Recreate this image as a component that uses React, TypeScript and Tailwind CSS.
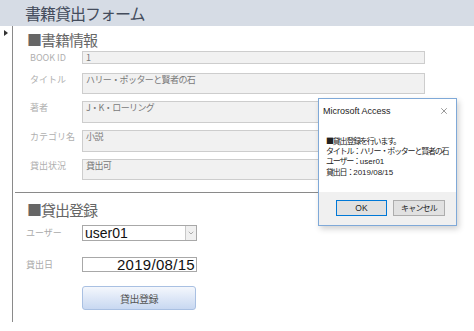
import { X, ChevronDown } from 'lucide-react';

const JP = { fontFamily: '"Noto Sans CJK JP", "Noto Sans", sans-serif' };
const LAT = { fontFamily: '"Liberation Sans", Arial, sans-serif' };

const bookFields = [
  { label: 'BOOK ID', value: '1', h: 'h-[13px]', mt: 'mt-[3px]' },
  { label: 'タイトル', value: 'ハリー・ポッターと賢者の石', h: 'h-[21px]', mt: 'mt-[9px]' },
  { label: '著者', value: 'J・K・ローリング', h: 'h-[22px]', mt: 'mt-[7px]' },
  { label: 'カテゴリ名', value: '小説', h: 'h-[22px]', mt: 'mt-[7px]' },
  { label: '貸出状況', value: '貸出可', h: 'h-[21px]', mt: 'mt-[7px]' },
];

function Jp({ children }: { children: React.ReactNode }) {
  return <span className="tracking-[-1.2px]">{children}</span>;
}

function Dialog() {
  return (
    <div className="absolute left-[318px] top-[98px] w-[139px] h-[128px] bg-white border border-[#7fa9d8] shadow-[2px_3px_6px_rgba(0,0,0,0.18)] flex flex-col">
      <div className="h-[24px] flex items-center justify-between pl-[4px] pr-[7px]">
        <span className="text-[9px] leading-none text-[#222]" style={LAT}>Microsoft Access</span>
        <X className="w-[10px] h-[10px] text-[#333]" strokeWidth={1.2} />
      </div>
      <div className="flex-1 pl-[7px] pt-[13px] text-[8px] leading-[10px] text-[#222] whitespace-nowrap">
        <div><Jp>■貸出登録を行います。</Jp></div>
        <div><Jp>タイトル：ハリー・ポッターと賢者の石</Jp></div>
        <div><Jp>ユーザー：</Jp><span style={LAT}>user01</span></div>
        <div><Jp>貸出日：</Jp><span style={LAT}>2019/08/15</span></div>
      </div>
      <div className="h-[33px] bg-[#f0f0f0] flex items-start gap-[6px] pl-[17px] pt-[8px]">
        <div className="w-[51px] h-[16px] border border-[#0078d7] bg-[#e1e1e1] flex items-center justify-center text-[8.5px] text-[#222]" style={LAT}>
          OK
        </div>
        <div className="w-[52px] h-[16px] border border-[#adadad] bg-[#e1e1e1] flex items-center justify-center text-[8px] tracking-[-0.8px] text-[#222]">
          キャンセル
        </div>
      </div>
    </div>
  );
}

export default function App() {
  return (
    <div className="relative w-[474px] h-[331px] overflow-hidden bg-white" style={JP}>
      <div className="h-[26px] bg-[#d6dce5] pl-[25px] flex items-center">
        <span className="text-[16px] leading-none tracking-[-1px] text-[#444c5c]">書籍貸出フォーム</span>
      </div>

      <div className="flex h-[296px]">
        <div className="w-[13px] border-r border-[#8a8a8a] relative">
          <div className="absolute left-[4px] top-[4px] w-0 h-0 border-y-[3px] border-y-transparent border-l-[4px] border-l-[#333]" />
        </div>

        <div className="flex-1 flex flex-col">
          <div className="pl-[14px] mt-[6px] text-[15px] leading-[16px] tracking-[-1px] text-[#666]">■書籍情報</div>

          {bookFields.map((f) => (
            <div key={f.label} className={`flex ${f.mt}`}>
              <div className="w-[52px] ml-[17px] pt-[1px] text-[9px] leading-[11px] text-[#b0b0b0] whitespace-nowrap">{f.label}</div>
              <div className={`w-[343px] ${f.h} bg-[#f1f1f1] border border-[#cdcdcd] px-[3px] pt-[1px] text-[9px] leading-[10px] tracking-[-0.6px] text-[#7a7a7a]`}>
                {f.value}
              </div>
            </div>
          ))}

          <div className="mt-[12px] ml-[2px] w-[415px] h-px bg-[#8a8a8a]" />

          <div className="pl-[14px] mt-[9px] text-[15px] leading-[16px] tracking-[-1px] text-[#666]">■貸出登録</div>

          <div className="flex items-center mt-[7px]">
            <div className="w-[56px] ml-[13px] text-[9px] text-[#aaa]">ユーザー</div>
            <div className="w-[115px] h-[16px] border border-[#a8a8a8] flex items-center">
              <span className="flex-1 pl-[2px] text-[14px] leading-none text-[#111]" style={LAT}>
                user01
              </span>
              <div className="w-[11px] h-[14px] border-l border-[#c8c8c8] bg-[#f0f0f0] flex items-center justify-center">
                <ChevronDown className="w-[8px] h-[8px] text-[#666]" strokeWidth={1.5} />
              </div>
            </div>
          </div>

          <div className="flex items-center mt-[16px]">
            <div className="w-[56px] ml-[13px] text-[9px] text-[#aaa]">貸出日</div>
            <div className="w-[115px] h-[15px] border border-[#a8a8a8] flex items-center justify-end pr-[1px]">
              <span className="text-[15px] leading-none text-[#111] tracking-[0.3px]" style={LAT}>
                2019/08/15
              </span>
            </div>
          </div>

          <div className="ml-[69px] mt-[14px] w-[114px] h-[24px] rounded-[3px] border border-[#a9c0e2] bg-gradient-to-b from-[#f4f7fc] to-[#c8d8f1] flex items-center justify-center text-[10px] tracking-[-0.5px] text-[#555]">
            貸出登録
          </div>
        </div>
      </div>

      <Dialog />
    </div>
  );
}
